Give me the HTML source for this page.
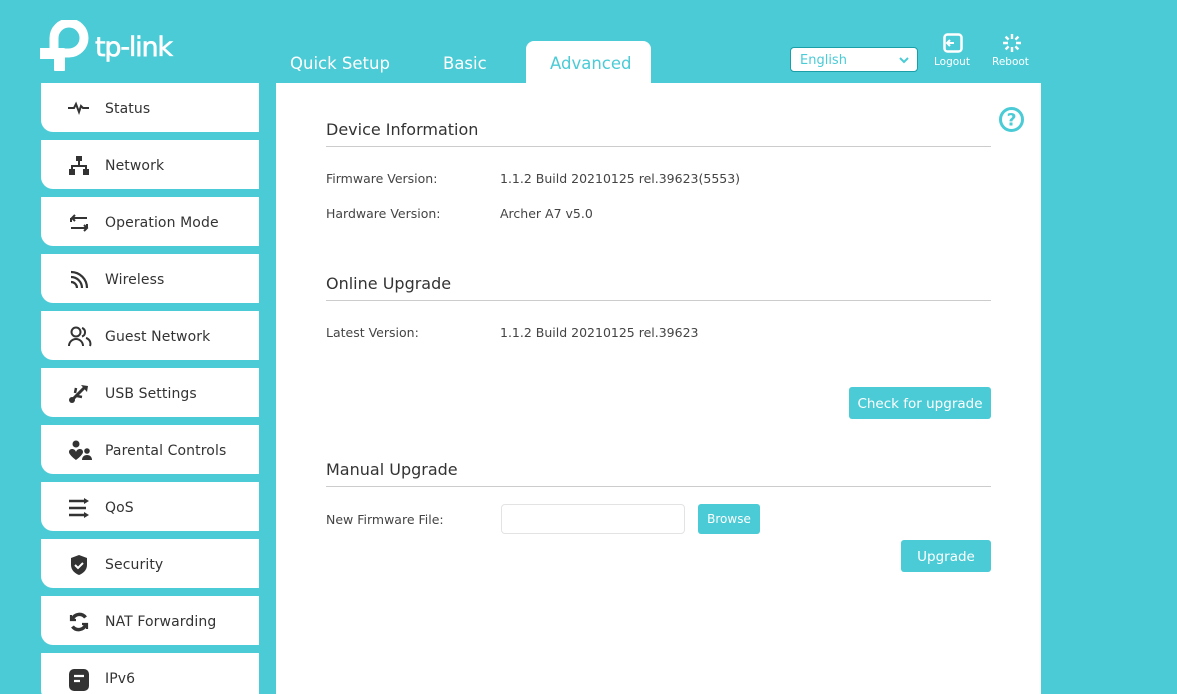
<!DOCTYPE html>
<html><head><meta charset="utf-8"><style>
*{margin:0;padding:0;box-sizing:border-box}
html,body{width:1177px;height:694px;overflow:hidden}
body{background:#4acbd6;font-family:"DejaVu Sans","Liberation Sans",sans-serif;position:relative;color:#333}
.a{position:absolute}
.item{position:absolute;left:41px;width:218px;height:49px;background:#fff;border-bottom-left-radius:12px;font-size:14px;color:#333;overflow:hidden}
.item span{position:absolute;left:64px;top:18px;letter-spacing:0.1px}
.item svg{position:absolute;left:27px;top:15px}
.tab{position:absolute;top:54px;font-size:16.5px;color:#fff}
.h{position:absolute;left:326px;font-size:16px;color:#333}
.line{position:absolute;left:326px;width:665px;height:1px;background:#ccc}
.lab{position:absolute;font-size:12.5px;color:#444}
.btn{position:absolute;background:#4acbd6;color:#fff;border-radius:3px;text-align:center}
</style></head><body>
<svg class="a" style="left:40px;top:20px" width="60" height="52" viewBox="0 0 60 52"><path d="M14 28 V18 A15 15 0 1 1 29 33 H24" fill="none" stroke="#fff" stroke-width="9"/><rect x="0" y="28" width="16" height="11" fill="#fff"/><rect x="14" y="28" width="11" height="23" fill="#fff" rx="1"/></svg>
<div class="a" style="left:95px;top:32px;font-size:27px;color:#fff;font-family:'DejaVu Sans',sans-serif;letter-spacing:-1.2px;-webkit-text-stroke:0.6px #fff">tp-link</div>
<div class="tab" style="left:290px">Quick Setup</div>
<div class="tab" style="left:443px">Basic</div>
<div class="a" style="left:526px;top:41px;width:125px;height:44px;background:#fff;border-radius:8px 8px 0 0"></div>
<div class="tab" style="left:550px;color:#4acbd6">Advanced</div>
<div class="a" style="left:790px;top:47px;width:128px;height:25px;background:#fff;border:1px solid #1a9ea8;border-radius:4px;font-size:13px;color:#4acbd6;padding:5px 9px">English<svg class="a" style="right:8px;top:9px" width="10" height="7"><path d="M1 1 L5 5 L9 1" stroke="#4acbd6" stroke-width="2" fill="none"/></svg></div>
<svg class="a" style="left:943px;top:33px" width="20" height="20"><rect x="1.5" y="1.5" width="17" height="17" rx="3" fill="none" stroke="#fff" stroke-width="2.5"/><path d="M4 10 H11 M7 7 L4 10 L7 13" stroke="#fff" stroke-width="2" fill="none"/></svg>
<div class="a" style="left:934px;top:56px;font-size:10.5px;color:#fff">Logout</div>
<svg class="a" style="left:1002px;top:33px" width="20" height="20" stroke="#fff" stroke-width="2.4"><path d="M10 1v5M10 14v5M1 10h5M14 10h5M3.6 3.6l3 3M13.4 13.4l3 3M3.6 16.4l3-3M13.4 6.6l3-3"/></svg>
<div class="a" style="left:992px;top:56px;font-size:10.5px;color:#fff">Reboot</div>
<div class="item" style="top:83px"><svg width="22" height="20"><path d="M0 10h6l2-4 3 8 2-6 2 2h6" stroke="#333" stroke-width="2" fill="none"/></svg><span>Status</span></div>
<div class="item" style="top:140px"><svg width="22" height="22" fill="#333"><rect x="8" y="1" width="6" height="5"/><rect x="1" y="14" width="6" height="6"/><rect x="15" y="14" width="6" height="6"/><path d="M11 6v5M4 14v-3h14v3" stroke="#333" stroke-width="2" fill="none"/></svg><span>Network</span></div>
<div class="item" style="top:197px"><svg width="22" height="22" stroke="#333" stroke-width="2" fill="none"><path d="M19 6H4M7 3L4 6 7 9M3 16h16M16 13l3 3-3 3M3 6v4M19 16v-4"/></svg><span>Operation Mode</span></div>
<div class="item" style="top:254px"><svg width="22" height="22" stroke="#333" stroke-width="2.2" fill="none"><path d="M3 3a16 16 0 0 1 16 16M3 8a11 11 0 0 1 11 11M3 13a6 6 0 0 1 6 6"/></svg><span>Wireless</span></div>
<div class="item" style="top:311px"><svg width="24" height="22" stroke="#333" stroke-width="2" fill="none"><circle cx="8" cy="6" r="4.5"/><path d="M1 20a7 7 0 0 1 14 0M14 2a4.5 4.5 0 0 1 0 8.5M18 12a6 6 0 0 1 4 8"/></svg><span>Guest Network</span></div>
<div class="item" style="top:368px"><svg width="22" height="22" fill="#333"><circle cx="4" cy="17" r="3"/><path d="M4 17L16 5" stroke="#333" stroke-width="3"/><path d="M13 2l7 1-1 6z"/><path d="M9 13l5 1M7 10l1-5" stroke="#333" stroke-width="2.5"/></svg><span>USB Settings</span></div>
<div class="item" style="top:425px"><svg width="24" height="22" fill="#333"><circle cx="8" cy="4" r="3.5"/><path d="M1 12c0-4 6-4 7 0 1-4 7-4 7 0 0 3-7 8-7 8s-7-5-7-8z"/><circle cx="19" cy="11" r="2.8"/><path d="M14 20c0-3 2-5 5-5s5 2 5 5z"/></svg><span>Parental Controls</span></div>
<div class="item" style="top:482px"><svg width="22" height="22" stroke="#333" stroke-width="2.5" fill="#333"><path d="M1 4h17M1 11h17M1 18h17" fill="none"/><path d="M16 1l5 3-5 3zM16 15l5 3-5 3z" stroke-width="0"/></svg><span>QoS</span></div>
<div class="item" style="top:539px"><svg width="22" height="22"><path d="M11 1l8 3v7c0 5-4 8.5-8 10-4-1.5-8-5-8-10V4z" fill="#333"/><path d="M7 11l3 3 5-5" stroke="#fff" stroke-width="2" fill="none"/></svg><span>Security</span></div>
<div class="item" style="top:596px"><svg width="22" height="22" stroke="#333" stroke-width="3.5" fill="none"><path d="M4.5 8a7.5 7.5 0 0 1 13 -1.5M17.5 14a7.5 7.5 0 0 1-13 1.5"/><path d="M3 4v5h5M19 18v-5h-5" stroke-width="2.2"/></svg><span>NAT Forwarding</span></div>
<div class="item" style="top:653px"><svg width="22" height="24"><rect x="1" y="1" width="20" height="22" rx="5" fill="#333"/><path d="M6 8h10M6 13h6" stroke="#fff" stroke-width="2.2"/></svg><span>IPv6</span></div>
<div class="a" style="left:276px;top:83px;width:765px;height:611px;background:#fff"></div>
<svg class="a" style="left:998px;top:106px" width="27" height="27"><circle cx="13.5" cy="13.5" r="11" fill="none" stroke="#4acbd6" stroke-width="3"/><text x="13.5" y="19.5" text-anchor="middle" font-size="17" font-weight="bold" fill="#4acbd6" font-family="DejaVu Sans">?</text></svg>
<div class="h" style="top:120px">Device Information</div>
<div class="line" style="top:146px"></div>
<div class="lab" style="left:326px;top:171px">Firmware Version:</div>
<div class="lab" style="left:500px;top:171px">1.1.2 Build 20210125 rel.39623(5553)</div>
<div class="lab" style="left:326px;top:206px">Hardware Version:</div>
<div class="lab" style="left:500px;top:206px">Archer A7 v5.0</div>
<div class="h" style="top:274px">Online Upgrade</div>
<div class="line" style="top:300px"></div>
<div class="lab" style="left:326px;top:325px">Latest Version:</div>
<div class="lab" style="left:500px;top:325px">1.1.2 Build 20210125 rel.39623</div>
<div class="btn" style="left:849px;top:387px;width:142px;height:32px;font-size:13.5px;line-height:34px">Check for upgrade</div>
<div class="h" style="top:460px">Manual Upgrade</div>
<div class="line" style="top:486px"></div>
<div class="lab" style="left:326px;top:512px">New Firmware File:</div>
<div class="a" style="left:501px;top:504px;width:184px;height:30px;border:1px solid #e3e3e3;border-radius:4px"></div>
<div class="btn" style="left:698px;top:504px;width:62px;height:30px;font-size:12px;line-height:31px">Browse</div>
<div class="btn" style="left:901px;top:540px;width:90px;height:32px;font-size:13.5px;line-height:35px">Upgrade</div>
</body></html>
